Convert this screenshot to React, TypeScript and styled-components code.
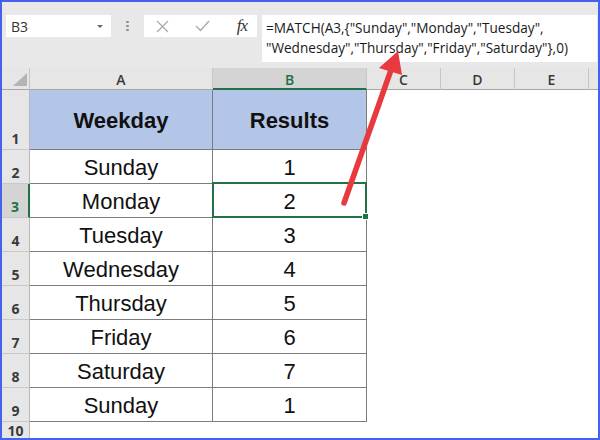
import React from "react";
import styled, { createGlobalStyle } from "styled-components";

const Global = createGlobalStyle`
  html, body { margin: 0; padding: 0; background: #fff; }
  * { box-sizing: border-box; }
`;

const Frame = styled.div`
  position: relative;
  width: 600px;
  height: 440px;
  border: 2px solid #4462ee;
  background: #e8e8e8;
  display: flex;
  flex-direction: column;
  overflow: hidden;
  font-family: "Liberation Sans", Arial, sans-serif;
`;

const FormulaBar = styled.div`
  height: 66px;
  flex: none;
  display: flex;
  align-items: flex-start;
  padding: 13px 1px 0 4px;
`;

const NameBox = styled.div`
  width: 105px;
  height: 22px;
  background: #fff;
  display: flex;
  align-items: center;
  justify-content: space-between;
  padding: 0 8px 0 5px;
  font-family: "Open Sans", "Noto Sans", sans-serif;
  font-size: 14px;
  color: #333;
`;

const Caret = styled.span`
  width: 0;
  height: 0;
  border-left: 3px solid transparent;
  border-right: 3px solid transparent;
  border-top: 3px solid #666;
`;

const Dots = styled.div`
  width: 33px;
  height: 22px;
  display: flex;
  flex-direction: column;
  align-items: center;
  justify-content: center;
  gap: 2px;
  & > span {
    width: 3px;
    height: 2px;
    background: #8c8c8c;
    border-radius: 1px;
  }
`;

const ButtonBox = styled.div`
  width: 113px;
  height: 22px;
  background: #fff;
  display: flex;
  align-items: center;
  justify-content: space-between;
  padding: 0 10px 0 12px;
`;

const Fx = styled.span`
  font-family: "Liberation Serif", "Times New Roman", serif;
  font-style: italic;
  font-size: 17px;
  color: #333;
  letter-spacing: -1px;
`;

const FormulaBox = styled.div`
  flex: 1;
  margin-left: 5px;
  height: 47px;
  background: #fff;
  padding: 3px 0 0 4px;
  font-family: "Open Sans", "Noto Sans", sans-serif;
  font-size: 13.6px;
  line-height: 20px;
  color: #1a1a1a;
  white-space: nowrap;
  overflow: hidden;
`;

const Sheet = styled.div`
  flex: 1;
  display: grid;
  grid-template-columns: 28px 183px 154px 74px 74px 74px 1fr;
  grid-template-rows: 22px 60px repeat(8, 34px) 1fr;
  background: #fff;
`;

const Corner = styled.div`
  background: #e6e6e6;
  border-right: 1px solid #c6c6c6;
  border-bottom: 1px solid #a8a8a8;
  display: flex;
  align-items: flex-end;
  justify-content: flex-end;
  padding: 0 2px 3px 0;
`;

const ColHeader = styled.div<{ $sel?: boolean; $last?: boolean }>`
  background: ${(p) => (p.$sel ? "#d4d4d4" : "#e6e6e6")};
  color: ${(p) => (p.$sel ? "#217346" : "#3a3a3a")};
  border-right: ${(p) => (p.$last ? "none" : "1px solid #c6c6c6")};
  border-bottom: ${(p) => (p.$sel ? "2px solid #217346" : "1px solid #a8a8a8")};
  display: flex;
  align-items: center;
  justify-content: center;
  padding-top: 2px;
  font-family: "Open Sans", "Noto Sans", sans-serif;
  font-weight: 600;
  font-size: 14px;
`;

const RowHeader = styled.div<{ $sel?: boolean }>`
  background: ${(p) => (p.$sel ? "#d4d4d4" : "#e6e6e6")};
  color: ${(p) => (p.$sel ? "#217346" : "#3a3a3a")};
  border-right: ${(p) => (p.$sel ? "2px solid #217346" : "1px solid #b8b8b8")};
  border-bottom: 1px solid #c8c8c8;
  display: flex;
  align-items: flex-end;
  justify-content: center;
  padding-bottom: 1px;
  font-family: "Open Sans", "Noto Sans", sans-serif;
  font-weight: 700;
  font-size: 14px;
  line-height: 18px;
`;

const Cell = styled.div<{ $head?: boolean; $sel?: boolean }>`
  position: relative;
  background: ${(p) => (p.$head ? "#b4c6e7" : "#fff")};
  border-right: 1px solid #7c7c7c;
  border-bottom: 1px solid #7c7c7c;
  display: flex;
  align-items: ${(p) => (p.$head ? "center" : "flex-end")};
  justify-content: center;
  padding-bottom: ${(p) => (p.$head ? "0" : "1px")};
  padding-top: ${(p) => (p.$head ? "3px" : "0")};
  font-size: 22px;
  line-height: 28px;
  font-weight: ${(p) => (p.$head ? 700 : 400)};
  color: #111;
  ${(p) =>
    p.$sel &&
    `
    &::before {
      content: "";
      position: absolute;
      top: -2px; left: -1px; right: -1px; bottom: -1px;
      border: 2px solid #217346;
      z-index: 1;
    }
    &::after {
      content: "";
      position: absolute;
      right: -3px; bottom: -3px;
      width: 5px; height: 5px;
      background: #217346;
      border: 1px solid #fff;
      z-index: 2;
    }
  `}
`;

const Empty = styled.div`
  background: #fff;
`;

const Arrow = styled.svg`
  position: absolute;
  top: -2px;
  left: -2px;
  width: 600px;
  height: 440px;
  pointer-events: none;
  z-index: 5;
`;

const rows: [string, string][] = [
  ["Sunday", "1"],
  ["Monday", "2"],
  ["Tuesday", "3"],
  ["Wednesday", "4"],
  ["Thursday", "5"],
  ["Friday", "6"],
  ["Saturday", "7"],
  ["Sunday", "1"],
];

export default function App() {
  return (
    <>
      <Global />
      <Frame>
        <FormulaBar>
          <NameBox>
            <span>B3</span>
            <Caret />
          </NameBox>
          <Dots>
            <span />
            <span />
            <span />
          </Dots>
          <ButtonBox>
            <svg width="13" height="13" viewBox="0 0 13 13">
              <path d="M1 1 L12 12 M12 1 L1 12" stroke="#a8a8a8" strokeWidth="1.2" fill="none" />
            </svg>
            <svg width="15" height="12" viewBox="0 0 15 12">
              <path d="M1 6 L5.5 10.5 L14 1" stroke="#a8a8a8" strokeWidth="1.3" fill="none" />
            </svg>
            <Fx>fx</Fx>
          </ButtonBox>
          <FormulaBox>
            <div>=MATCH(A3,{"{"}"Sunday","Monday","Tuesday",</div>
            <div>"Wednesday","Thursday","Friday","Saturday"{"}"},0)</div>
          </FormulaBox>
        </FormulaBar>
        <Sheet>
          <Corner>
            <svg width="14" height="13" viewBox="0 0 14 13">
              <polygon points="14,0 14,13 0,13" fill="#b4b4b4" />
            </svg>
          </Corner>
          <ColHeader>A</ColHeader>
          <ColHeader $sel>B</ColHeader>
          <ColHeader>C</ColHeader>
          <ColHeader>D</ColHeader>
          <ColHeader>E</ColHeader>
          <ColHeader $last />

          <RowHeader>1</RowHeader>
          <Cell $head>Weekday</Cell>
          <Cell $head>Results</Cell>
          <Empty />
          <Empty />
          <Empty />
          <Empty />

          {rows.map(([day, n], i) => (
            <React.Fragment key={i}>
              <RowHeader $sel={i === 1}>{i + 2}</RowHeader>
              <Cell>{day}</Cell>
              <Cell $sel={i === 1}>{n}</Cell>
              <Empty />
              <Empty />
              <Empty />
              <Empty />
            </React.Fragment>
          ))}

          <RowHeader>10</RowHeader>
          <Empty />
          <Empty />
          <Empty />
          <Empty />
          <Empty />
          <Empty />
        </Sheet>
        <Arrow viewBox="0 0 600 440">
          <line x1="344" y1="203" x2="391" y2="70" stroke="#e8393f" strokeWidth="5.5" strokeLinecap="round" />
          <polygon points="398,51 379,68 402,75" fill="#e8393f" />
        </Arrow>
      </Frame>
    </>
  );
}
